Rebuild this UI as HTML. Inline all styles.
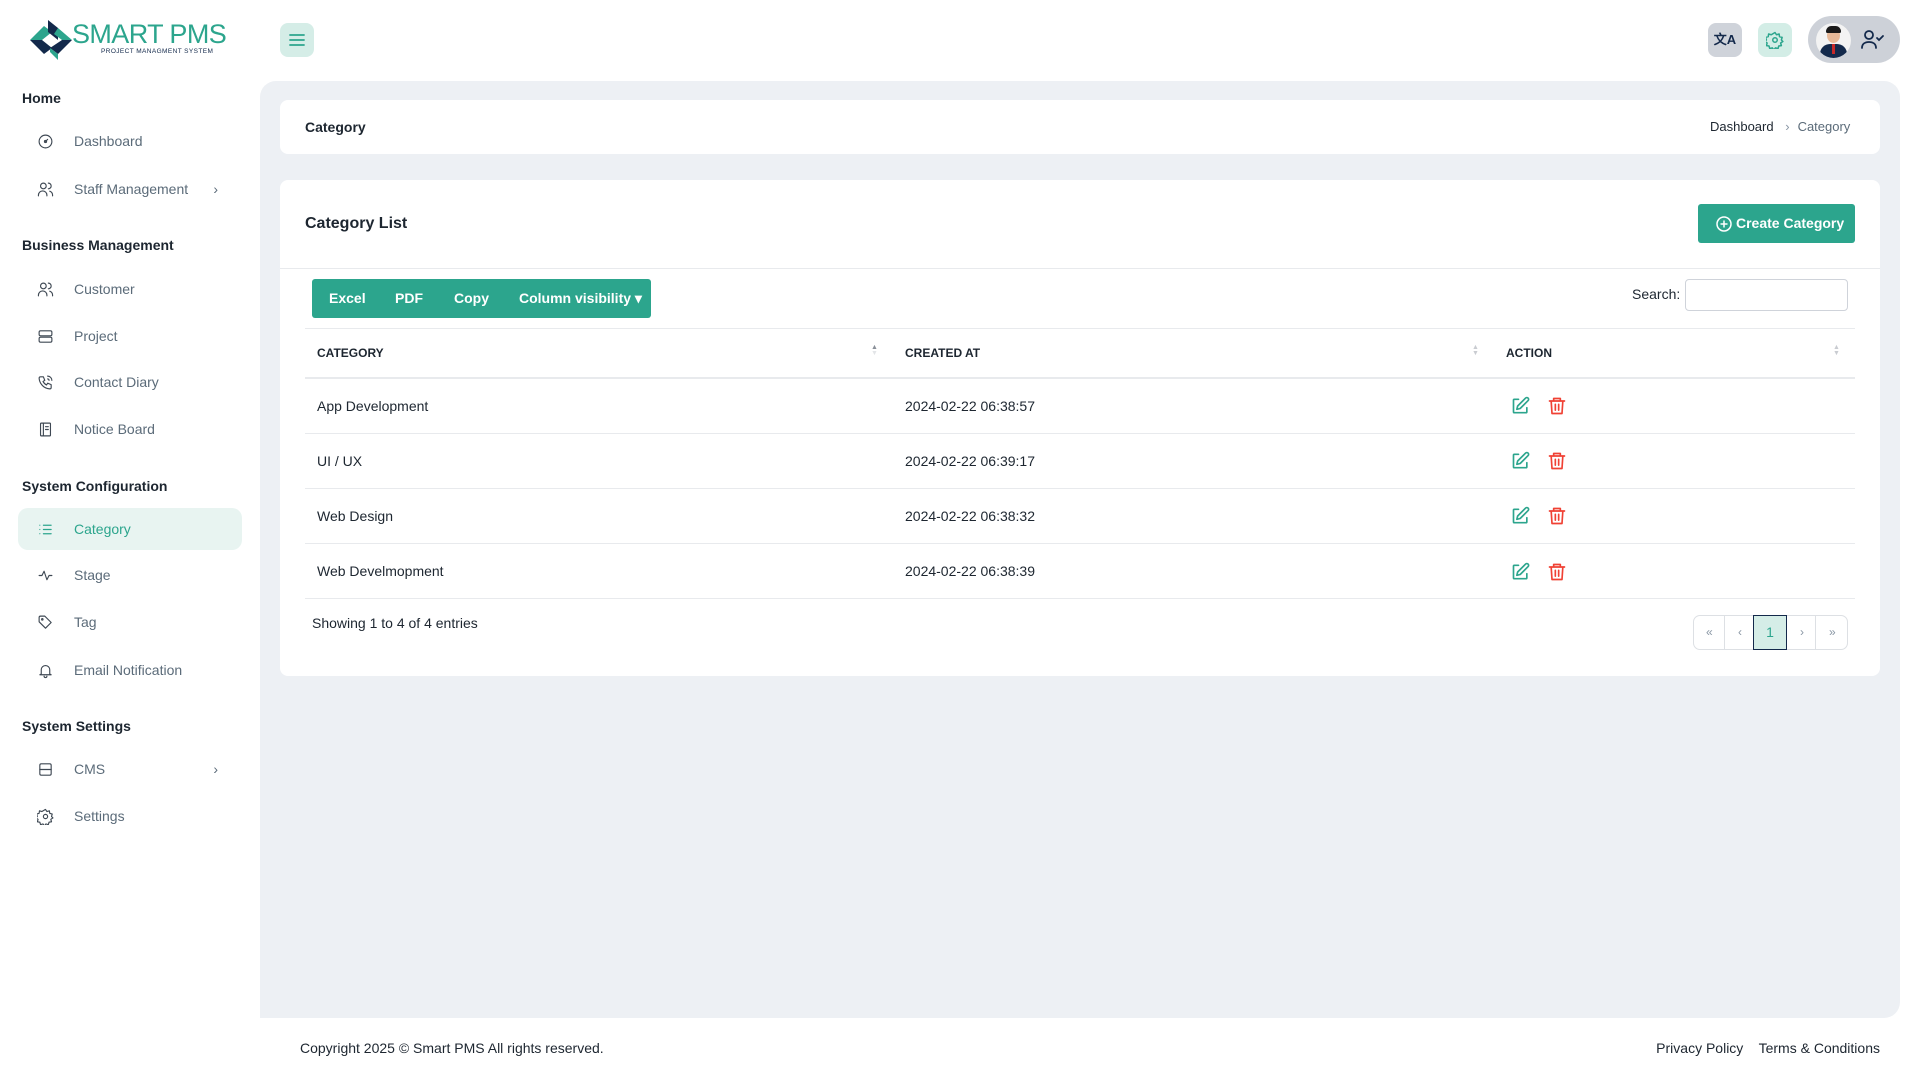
<!DOCTYPE html>
<html><head><meta charset="utf-8"><style>
*{box-sizing:border-box;margin:0;padding:0}
body{width:1920px;height:1080px;background:#fff;font-family:"Liberation Sans",sans-serif;color:#1d2630;position:relative;overflow:hidden;font-size:14px}
.abs{position:absolute}
.sec{position:absolute;left:22px;font-size:14px;font-weight:bold;color:#1d2630}
.it{position:absolute;left:18px;width:224px;height:42px;display:flex;align-items:center;font-size:14px;color:#5b6b79;border-radius:10px}
.it svg{position:absolute;left:19px;width:17px;height:17px;fill:none;stroke:#3e4853;stroke-width:1.6;stroke-linecap:round;stroke-linejoin:round}
.it span{position:absolute;left:56px}
.it .chev{left:auto;right:24px;color:#5b6b79}
.act{background:#e8f4f1;color:#2ca58d}
.act svg{stroke:#2ca58d}
.card{position:absolute;background:#fff;border-radius:8px;left:280px;width:1600px}
.th{position:absolute;top:346px;font-size:12px;font-weight:bold;color:#1d2630}
.row{position:absolute;left:305px;width:1550px;height:55px;border-bottom:1px solid #e8eaed;font-size:14px}
.row div{position:absolute;top:19px}
.sort{position:absolute;top:345px;width:8px;font-size:7px;color:#c9ccd1;line-height:6px}
</style></head><body>

<!-- logo -->
<svg class="abs" style="left:28px;top:18px" width="46" height="44" viewBox="0 0 46 44">
<polygon points="2,22 16,8 24,14 14,22" fill="#2ca58d"/>
<polygon points="14,22 24,30 16,36 2,22" fill="#13294b"/>
<polygon points="20,2 30,10 30,22 20,14" fill="#13294b"/>
<polygon points="30,10 44,22 34,22 26,16" fill="#2ca58d"/>
<polygon points="44,22 30,36 22,30 34,22" fill="#13294b"/>
<polygon points="22,30 30,36 30,42 22,34" fill="#2ca58d"/>
</svg>
<div class="abs" style="left:72px;top:19px;font-size:27px;color:#2ca58d;letter-spacing:-0.6px;line-height:30px">SMART PMS</div>
<div class="abs" style="left:101px;top:48px;font-size:6.5px;color:#13294b;letter-spacing:0.4px">PROJECT MANAGMENT SYSTEM</div>

<div class="abs" style="left:280px;top:23px;width:34px;height:34px;border-radius:8px;background:#d5ede7"></div>
<svg class="abs" style="left:288px;top:32px" width="18" height="16"><path d="M2 3h14M2 8h14M2 13h14" stroke="#2ca58d" stroke-width="1.8" stroke-linecap="round"/></svg>

<div class="abs" style="left:1708px;top:23px;width:34px;height:34px;border-radius:8px;background:#cfd3da;font-size:13px;font-weight:bold;color:#13294b;text-align:center;line-height:34px">文A</div>
<div class="abs" style="left:1758px;top:23px;width:34px;height:34px;border-radius:8px;background:#d3ede6"></div>
<svg class="abs" style="left:1766px;top:31px" width="18" height="18" viewBox="0 0 24 24" fill="none" stroke="#2ca58d" stroke-width="2"><circle cx="12" cy="12" r="3"/><path d="M12 2l2 3 3.5-1 .5 3.5 3.5 1-1 3.5 2 2-3 2 1 3.5-3.5.5-1 3.5-3.5-1-2 3-2-3-3.5 1-1-3.5-3.5-.5 1-3.5-3-2 2-2-1-3.5 3.5-1 .5-3.5 3.5 1z" stroke-linejoin="round"/></svg>
<div class="abs" style="left:1808px;top:16px;width:92px;height:47px;border-radius:24px;background:#cdd1d8"></div>
<div class="abs" style="left:1816px;top:23px;width:35px;height:35px;border-radius:50%;background:#f3f3f3;overflow:hidden">
<div class="abs" style="left:11px;top:5px;width:13px;height:15px;border-radius:50%;background:#e7b998"></div>
<div class="abs" style="left:10px;top:3px;width:15px;height:7px;border-radius:7px 7px 2px 2px;background:#1a1a1a"></div>
<div class="abs" style="left:4px;top:21px;width:27px;height:16px;border-radius:10px 10px 0 0;background:#13294b"></div>
<div class="abs" style="left:16px;top:21px;width:3px;height:10px;background:#c62828"></div>
</div>
<svg class="abs" style="left:1861px;top:29px" width="24" height="20" viewBox="0 0 24 20" fill="none" stroke="#13294b" stroke-width="1.8" stroke-linecap="round"><circle cx="8" cy="6" r="4"/><path d="M1 19c0-4 3-6 7-6s7 2 7 6"/><path d="M16 9l2 2 4-4"/></svg>

<!-- sidebar -->
<div class="sec" style="top:90px">Home</div>
<div class="it" style="top:120px"><svg viewBox="0 0 24 24"><circle cx="12" cy="12" r="9"/><path d="M12 12l3-3"/><circle cx="12" cy="12" r="1.5"/></svg><span>Dashboard</span></div>
<div class="it" style="top:168px"><svg viewBox="0 0 24 24"><circle cx="9" cy="7" r="4"/><path d="M2 21v-1a6 6 0 0 1 12 0v1M16 3a4 4 0 0 1 0 8M22 21v-1a6 6 0 0 0-4-5.6"/></svg><span>Staff Management</span><span class="chev">›</span></div>
<div class="sec" style="top:237px">Business Management</div>
<div class="it" style="top:268px"><svg viewBox="0 0 24 24"><circle cx="9" cy="7" r="4"/><path d="M2 21v-1a6 6 0 0 1 12 0v1M16 3a4 4 0 0 1 0 8M22 21v-1a6 6 0 0 0-4-5.6"/></svg><span>Customer</span></div>
<div class="it" style="top:315px"><svg viewBox="0 0 24 24"><rect x="3" y="4" width="18" height="7" rx="2"/><rect x="3" y="13" width="18" height="7" rx="2"/></svg><span>Project</span></div>
<div class="it" style="top:361px"><svg viewBox="0 0 24 24"><path d="M5 4h4l2 5-2.5 1.5a11 11 0 0 0 5 5L15 13l5 2v4a2 2 0 0 1-2 2A16 16 0 0 1 3 6a2 2 0 0 1 2-2M15 3a6 6 0 0 1 6 6M15 7a2 2 0 0 1 2 2"/></svg><span>Contact Diary</span></div>
<div class="it" style="top:408px"><svg viewBox="0 0 24 24"><rect x="5" y="3" width="14" height="18" rx="1"/><path d="M9 3v18M12 8h4M12 12h4"/></svg><span>Notice Board</span></div>
<div class="sec" style="top:478px">System Configuration</div>
<div class="it act" style="top:508px"><svg viewBox="0 0 24 24"><path d="M9 6h11M9 12h11M9 18h11M4 6h.01M4 12h.01M4 18h.01"/></svg><span>Category</span></div>
<div class="it" style="top:554px"><svg viewBox="0 0 24 24"><path d="M3 12h4l3-6 4 12 3-6h4"/></svg><span>Stage</span></div>
<div class="it" style="top:601px"><svg viewBox="0 0 24 24"><path d="M3 5v6l9 9 8-8-9-9H5a2 2 0 0 0-2 2z"/><circle cx="7.5" cy="7.5" r="1"/></svg><span>Tag</span></div>
<div class="it" style="top:649px"><svg viewBox="0 0 24 24"><path d="M6 17V11a6 6 0 0 1 12 0v6l2 1H4zM10 20a2 2 0 0 0 4 0"/></svg><span>Email Notification</span></div>
<div class="sec" style="top:718px">System Settings</div>
<div class="it" style="top:748px"><svg viewBox="0 0 24 24"><rect x="4" y="4" width="16" height="16" rx="2"/><path d="M4 12h16"/></svg><span>CMS</span><span class="chev">›</span></div>
<div class="it" style="top:795px"><svg viewBox="0 0 24 24"><circle cx="12" cy="12" r="3"/><path d="M12 2l2 3 3.5-1 .5 3.5 3.5 1-1 3.5 2 2-3 2 1 3.5-3.5.5-1 3.5-3.5-1-2 3-2-3-3.5 1-1-3.5-3.5-.5 1-3.5-3-2 2-2-1-3.5 3.5-1 .5-3.5 3.5 1z"/></svg><span>Settings</span></div>

<!-- main -->
<div class="abs" style="left:260px;top:81px;width:1640px;height:937px;background:#edf0f4;border-radius:16px 16px 16px 0"></div>
<div class="card" style="top:100px;height:54px">
<div class="abs" style="left:25px;top:19px;font-size:14px;font-weight:bold;color:#1d2630">Category</div>
<div class="abs" style="left:1430px;top:19px;font-size:13px;color:#1d2630">Dashboard <span style="color:#8996a4;margin:0 8px">›</span><span style="color:#5b6b79">Category</span></div>
</div>
<div class="card" style="top:180px;height:496px">
<div class="abs" style="left:25px;top:35px;font-size:16px;font-weight:bold">Category List</div>
<div class="abs" style="left:1418px;top:24px;width:157px;height:39px;background:#2ca58d;border-radius:3px;color:#fff;font-size:14px;font-weight:bold;line-height:39px;padding-left:38px">Create Category</div>
<svg class="abs" style="left:1436px;top:36px" width="16" height="16" viewBox="0 0 16 16" fill="none" stroke="#fff" stroke-width="1.5"><circle cx="8" cy="8" r="7"/><path d="M8 4.5v7M4.5 8h7"/></svg>
<div class="abs" style="left:0;top:88px;width:1600px;height:1px;background:#e8eaed"></div>
<div class="abs" style="left:32px;top:99px;width:339px;height:39px;background:#2ca58d;border-radius:3px;color:#fff;font-size:14px;font-weight:bold;line-height:39px">
<span class="abs" style="left:17px">Excel</span><span class="abs" style="left:83px">PDF</span><span class="abs" style="left:142px">Copy</span><span class="abs" style="left:207px">Column visibility ▾</span></div>
<div class="abs" style="left:1352px;top:106px;font-size:14px">Search:</div>
<div class="abs" style="left:1405px;top:99px;width:163px;height:32px;border:1px solid #cfd3da;border-radius:4px"></div>
</div>
<div class="abs" style="left:305px;top:328px;width:1550px;height:1px;background:#e8eaed"></div>
<div class="abs" style="left:305px;top:377px;width:1550px;height:2px;background:#e8eaed"></div>
<div class="th" style="left:317px">CATEGORY</div>
<div class="th" style="left:905px">CREATED AT</div>
<div class="th" style="left:1506px">ACTION</div>
<div class="sort" style="left:871px;color:#8a9099">▲<br><span style="color:#e3e5e8">▼</span></div>
<div class="sort" style="left:1472px">▲<br>▼</div>
<div class="sort" style="left:1833px">▲<br>▼</div>

<div class="row" style="top:379px"><div style="left:12px">App Development</div><div style="left:600px">2024-02-22 06:38:57</div></div>
<div class="row" style="top:434px"><div style="left:12px">UI / UX</div><div style="left:600px">2024-02-22 06:39:17</div></div>
<div class="row" style="top:489px"><div style="left:12px">Web Design</div><div style="left:600px">2024-02-22 06:38:32</div></div>
<div class="row" style="top:544px"><div style="left:12px">Web Develmopment</div><div style="left:600px">2024-02-22 06:38:39</div></div>

<svg width="0" height="0" style="position:absolute"><defs>
<g id="ed" fill="none" stroke="#2ca58d" stroke-width="2" stroke-linecap="round" stroke-linejoin="round"><path d="M9 4H4a1 1 0 0 0-1 1v14a1 1 0 0 0 1 1h14a1 1 0 0 0 1-1v-5"/><path d="M17.5 2.5a2 2 0 0 1 3 3L11 15l-4 1 1-4z"/></g>
<g id="tr" fill="none" stroke="#f04134" stroke-width="2" stroke-linecap="round" stroke-linejoin="round"><path d="M3 6h18M8 6V3h8v3M5 6l1 15h12l1-15M10 10v7M14 10v7"/></g></defs></svg>
<svg class="abs" style="left:1511px;top:396px" width="20" height="20" viewBox="0 0 24 24"><use href="#ed"/></svg>
<svg class="abs" style="left:1547px;top:396px" width="20" height="20" viewBox="0 0 24 24"><use href="#tr"/></svg>
<svg class="abs" style="left:1511px;top:451px" width="20" height="20" viewBox="0 0 24 24"><use href="#ed"/></svg>
<svg class="abs" style="left:1547px;top:451px" width="20" height="20" viewBox="0 0 24 24"><use href="#tr"/></svg>
<svg class="abs" style="left:1511px;top:506px" width="20" height="20" viewBox="0 0 24 24"><use href="#ed"/></svg>
<svg class="abs" style="left:1547px;top:506px" width="20" height="20" viewBox="0 0 24 24"><use href="#tr"/></svg>
<svg class="abs" style="left:1511px;top:562px" width="20" height="20" viewBox="0 0 24 24"><use href="#ed"/></svg>
<svg class="abs" style="left:1547px;top:562px" width="20" height="20" viewBox="0 0 24 24"><use href="#tr"/></svg>

<div class="abs" style="left:312px;top:615px;font-size:14px">Showing 1 to 4 of 4 entries</div>
<div class="abs" style="left:1693px;top:615px;width:155px;height:35px;border:1px solid #dde0e4;border-radius:7px;font-size:12px;color:#8996a4">
<span class="abs" style="left:12px;top:9px">«</span>
<div class="abs" style="left:30px;top:0;width:1px;height:33px;background:#dde0e4"></div>
<span class="abs" style="left:44px;top:9px">‹</span>
<div class="abs" style="left:59px;top:-1px;width:34px;height:35px;background:#d5ede7;border:1.5px solid #13294b;color:#2ca58d;font-size:14px;text-align:center;line-height:32px">1</div>
<span class="abs" style="left:106px;top:9px">›</span>
<div class="abs" style="left:121px;top:0;width:1px;height:33px;background:#dde0e4"></div>
<span class="abs" style="left:135px;top:9px">»</span>
</div>

<div class="abs" style="left:300px;top:1040px;font-size:14px">Copyright 2025 © Smart PMS All rights reserved.</div>
<div class="abs" style="right:40px;top:1040px;font-size:14px">Privacy Policy&nbsp;&nbsp;&nbsp; Terms &amp; Conditions</div>
</body></html>
